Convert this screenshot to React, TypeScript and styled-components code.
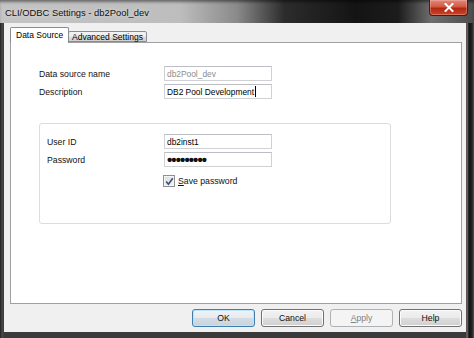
import styled, { createGlobalStyle } from 'styled-components';

const GlobalStyle = createGlobalStyle`
  html, body {
    margin: 0;
    padding: 0;
    background: #2a2a2a;
  }
  body {
    font-family: 'Liberation Sans', Arial, sans-serif;
  }
`;

export default function App() {
  return (
    <>
      <GlobalStyle />
      <Window>
        <TitleBar>
          <Title>CLI/ODBC Settings - db2Pool_dev</Title>
          <CloseButton aria-label="Close">
            <svg width="10" height="9" viewBox="0 0 10 9">
              <path d="M1.5 1 L8.5 8 M8.5 1 L1.5 8" stroke="#fff" strokeWidth="2" strokeLinecap="square" />
            </svg>
          </CloseButton>
        </TitleBar>
        <Body>
          <TabRow>
            <Tab $active>Data Source</Tab>
            <Tab>Advanced Settings</Tab>
          </TabRow>
          <Panel>
            <FormGrid $labelWidth={125}>
              <Label>Data source name</Label>
              <TextBox $muted>db2Pool_dev</TextBox>
              <Label>Description</Label>
              <TextBox>
                DB2 Pool Development<Caret />
              </TextBox>
            </FormGrid>
            <Group>
              <FormGrid $labelWidth={117}>
                <Label>User ID</Label>
                <TextBox>db2inst1</TextBox>
                <Label>Password</Label>
                <TextBox>
                  <Dots>•••••••••</Dots>
                </TextBox>
              </FormGrid>
              <CheckRow>
                <CheckBox>
                  <svg width="9" height="9" viewBox="0 0 9 9">
                    <path d="M1.2 4.6 L3.4 7.2 L7.8 1.2" stroke="#3d4f7e" strokeWidth="1.6" fill="none" />
                  </svg>
                </CheckBox>
                <CheckLabel>
                  <u>S</u>ave password
                </CheckLabel>
              </CheckRow>
            </Group>
          </Panel>
          <ButtonRow>
            <Button $default>OK</Button>
            <Button>Cancel</Button>
            <Button disabled>
              <u>A</u>pply
            </Button>
            <Button>Help</Button>
          </ButtonRow>
        </Body>
      </Window>
    </>
  );
}

const Window = styled.div`
  width: 474px;
  height: 338px;
  display: flex;
  flex-direction: column;
  background: linear-gradient(
    90deg,
    #1e1e1e 0px,
    #4a4a4a 2px,
    #3a3a3a 4px,
    #3a3a3a 466px,
    #777 467px,
    #111 469px,
    #222 472px,
    #555 474px
  );
  overflow: hidden;
`;

const TitleBar = styled.div`
  height: 23px;
  flex: none;
  display: flex;
  align-items: center;
  justify-content: space-between;
  padding: 0 5px 0 5px;
  background: linear-gradient(
    90deg,
    #c4c4c4 0%,
    #bdbdbd 38%,
    #8a8a8a 50%,
    #2c2c2c 60%,
    #141414 75%,
    #1c1c1c 84%,
    #6e6e6e 91%,
    #4c4c4c 100%
  );
  box-shadow: inset 0 3px 3px -1px rgba(0, 0, 0, 0.45);
  position: relative;
`;

const Title = styled.span`
  font-size: 9.4px;
  color: #111;
  text-shadow: 0 0 4px rgba(255, 255, 255, 0.7);
  margin-top: 1px;
`;

const CloseButton = styled.div`
  position: absolute;
  top: 0;
  right: 6px;
  width: 37px;
  height: 15px;
  display: flex;
  align-items: center;
  justify-content: center;
  border: 1px solid #4a1a12;
  border-top: none;
  border-radius: 0 0 4px 4px;
  background: linear-gradient(180deg, #e0897a 0%, #cf5a45 45%, #b5260f 55%, #c8452a 100%);
  box-shadow: inset 0 0 0 1px rgba(255, 200, 190, 0.35);
`;

const Body = styled.div`
  flex: 1;
  margin: 0 8px 6px 4px;
  background: #f0f0f0;
  padding: 5px 4px 5px 6px;
  display: flex;
  flex-direction: column;
  min-height: 0;
`;

const TabRow = styled.div`
  height: 14px;
  display: flex;
  align-items: flex-end;
  position: relative;
  z-index: 1;
`;

const Tab = styled.div<{ $active?: boolean }>`
  box-sizing: border-box;
  height: ${({ $active }) => ($active ? '16px' : '11px')};
  margin-bottom: ${({ $active }) => ($active ? '-1px' : '0')};
  margin-left: ${({ $active }) => ($active ? '0' : '-1px')};
  padding: ${({ $active }) => ($active ? '2px 5px 0 5px' : '0 3px')};
  width: ${({ $active }) => ($active ? '59px' : '79px')};
  font-size: 8.5px;
  line-height: ${({ $active }) => ($active ? '11px' : '10px')};
  color: #000;
  border: 1px solid #898c95;
  border-bottom: ${({ $active }) => ($active ? 'none' : '1px solid #898c95')};
  border-radius: 2px 2px 0 0;
  background: ${({ $active }) =>
    $active ? '#fff' : 'linear-gradient(180deg, #f3f3f3 0%, #ebebeb 50%, #dddddd 51%, #cfcfcf 100%)'};
  white-space: nowrap;
  position: relative;
  z-index: ${({ $active }) => ($active ? 2 : 1)};
`;

const Panel = styled.div`
  box-sizing: border-box;
  flex: 1;
  background: #fff;
  border: 1px solid #a0a0a0;
  padding: 23px 0 0 28px;
`;

const FormGrid = styled.div<{ $labelWidth: number }>`
  display: grid;
  grid-template-columns: ${({ $labelWidth }) => $labelWidth}px 108px;
  row-gap: 3px;
  align-items: center;
`;

const Label = styled.span`
  font-size: 8.7px;
  color: #111;
`;

const TextBox = styled.div<{ $muted?: boolean }>`
  box-sizing: border-box;
  height: 15px;
  border: 1px solid #cfd1d5;
  border-top-color: #bcbec3;
  background: #fff;
  padding: 0 2px;
  display: flex;
  align-items: center;
  font-size: 8.4px;
  color: ${({ $muted }) => ($muted ? '#8c8c8c' : '#000')};
  white-space: nowrap;
`;

const Caret = styled.span`
  display: inline-block;
  width: 1px;
  height: 11px;
  background: #000;
  margin-left: 1px;
`;

const Dots = styled.span`
  font-size: 15px;
  font-weight: bold;
  line-height: 1;
  letter-spacing: -0.9px;
  margin-top: -1px;
  color: #111;
`;

const Group = styled.div`
  box-sizing: border-box;
  width: 352px;
  height: 101px;
  margin-top: 24px;
  border: 1px solid #dcdcdc;
  border-radius: 3px;
  padding: 10px 0 0 7px;
`;

const CheckRow = styled.div`
  display: flex;
  align-items: center;
  margin: 8px 0 0 116px;
  gap: 3px;
`;

const CheckBox = styled.div`
  box-sizing: border-box;
  width: 12px;
  height: 12px;
  border: 1px solid #8e8f8f;
  background: linear-gradient(135deg, #dcdcdc 0%, #f4f4f4 100%);
  box-shadow: inset 0 0 0 1px #f6f6f6;
  display: flex;
  align-items: center;
  justify-content: center;
`;

const CheckLabel = styled.span`
  font-size: 8.7px;
  color: #111;
`;

const ButtonRow = styled.div`
  display: flex;
  justify-content: flex-end;
  gap: 6px;
  margin-top: 5px;
  padding-right: 0;
`;

const Button = styled.button<{ $default?: boolean }>`
  box-sizing: border-box;
  width: 63px;
  height: 18px;
  padding: 0;
  font-family: 'Liberation Sans', Arial, sans-serif;
  font-size: 8.7px;
  color: #111;
  border-radius: 3px;
  border: 1px solid ${({ $default }) => ($default ? '#3c7fb1' : '#707070')};
  background: ${({ $default }) =>
    $default
      ? 'linear-gradient(180deg, #f2f4f6 0%, #e6ebef 50%, #d4dde5 51%, #c8d3dd 100%)'
      : 'linear-gradient(180deg, #f2f2f2 0%, #ebebeb 50%, #dddddd 51%, #cfcfcf 100%)'};
  box-shadow: inset 0 0 0 1px ${({ $default }) => ($default ? '#bde3f7' : '#fcfcfc')};

  &:disabled {
    border-color: #adb2b5;
    background: #f4f4f4;
    color: #838383;
    box-shadow: none;
  }
`;
